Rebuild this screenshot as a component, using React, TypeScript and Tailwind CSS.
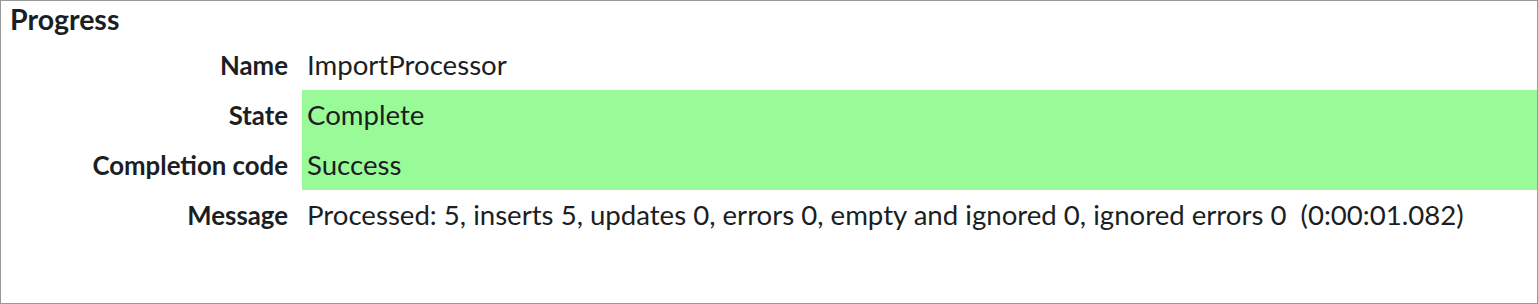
import React from 'react';

const rows = [
  { label: 'Name', value: 'ImportProcessor', ok: false },
  { label: 'State', value: 'Complete', ok: true },
  { label: 'Completion code', value: 'Success', ok: true },
  {
    label: 'Message',
    value: 'Processed: 5, inserts 5, updates 0, errors 0, empty and ignored 0, ignored errors 0\u00a0\u00a0(0:00:01.082)',
    ok: false,
  },
];

export default function App() {
  return (
    <div
      className="w-[1538px] h-[304px] border border-[#999] bg-white text-[#1b1e23]"
      style={{ fontFamily: 'Lato, "Open Sans", sans-serif' }}
    >
      <div className="pl-[9px] pt-[1px] text-[28.5px] font-bold leading-[34px]">Progress</div>
      <table className="mt-[4px] w-full border-collapse">
        <tbody>
          {rows.map((r) => (
            <tr key={r.label} className="h-[50px]">
              <th className="w-[301px] pr-[14px] text-right text-[25.8px] font-bold align-middle">{r.label}</th>
              <td className={`pl-[5px] text-[27.6px] align-middle ${r.ok ? 'bg-[#98fb98]' : ''}`}>{r.value}</td>
            </tr>
          ))}
        </tbody>
      </table>
    </div>
  );
}
